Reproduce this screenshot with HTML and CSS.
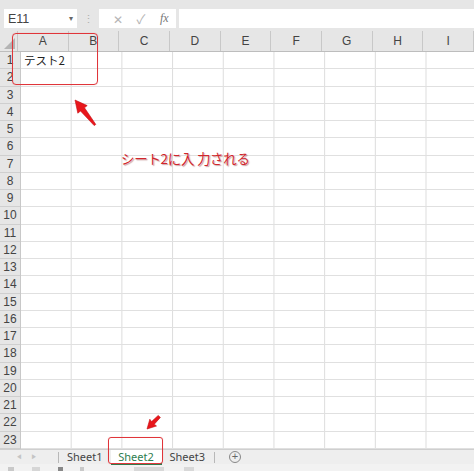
FILE: index.html
```html
<!DOCTYPE html>
<html lang="ja">
<head>
<meta charset="utf-8">
<link rel="stylesheet" href="styles.css">
</head>
<body>
<div class="app">
  <div class="fbar">
    <div class="namebox"><span>E11</span><span class="dd">▾</span></div>
    <div class="dots">⋮</div>
    <div class="fxbox">
      <span class="ico x">✕</span>
      <span class="ico ok">✓</span>
      <span class="ico fx"><i>fx</i></span>
    </div>
    <div class="finput"></div>
  </div>

  <div class="sheet">
    <div class="hrow">
      <div class="corner"><span class="tri"></span></div>
      <div class="ch">A</div><div class="ch">B</div><div class="ch">C</div><div class="ch">D</div><div class="ch">E</div><div class="ch">F</div><div class="ch">G</div><div class="ch">H</div><div class="ch">I</div>
    </div>
    <div class="body">
      <div class="rheads">
        <div class="rh">1</div><div class="rh">2</div><div class="rh">3</div><div class="rh">4</div><div class="rh">5</div><div class="rh">6</div><div class="rh">7</div><div class="rh">8</div><div class="rh">9</div><div class="rh">10</div><div class="rh">11</div><div class="rh">12</div><div class="rh">13</div><div class="rh">14</div><div class="rh">15</div><div class="rh">16</div><div class="rh">17</div><div class="rh">18</div><div class="rh">19</div><div class="rh">20</div><div class="rh">21</div><div class="rh">22</div><div class="rh">23</div>
      </div>
      <div class="cells">
        <div class="row"><span class="val">テスト2</span></div>
        <div class="row"></div><div class="row"></div><div class="row"></div><div class="row"></div><div class="row"></div><div class="row"></div><div class="row"></div><div class="row"></div><div class="row"></div><div class="row"></div><div class="row"></div><div class="row"></div><div class="row"></div><div class="row"></div><div class="row"></div><div class="row"></div><div class="row"></div><div class="row"></div><div class="row"></div><div class="row"></div><div class="row"></div><div class="row"></div>
      </div>
    </div>
  </div>

  <div class="tabbar">
    <span class="nav prev">◀</span><span class="nav">▶</span>
    <span class="sep sep1"></span>
    <span class="tab">Sheet1</span>
    <span class="tab active">Sheet2</span>
    <span class="tab">Sheet3</span>
    <span class="sep sep2"></span>
    <span class="plus">+</span>
  </div>
  <div class="status">
    <span class="sb s1"></span><span class="sb s2"></span><span class="sb s3"></span><span class="sb s4"></span><span class="sb s5"></span><span class="sb s6"></span>
  </div>

  <div class="mark box1"></div>
  <div class="mark box2"></div>
  <div class="note">シート2に入 力される</div>
  <svg class="arrows" width="474" height="471" viewBox="0 0 474 471">
    <polygon points="75,100 87.2,105.6 84.5,107.8 95.8,124.4 94.2,125.6 80.5,111 77.8,113.2" fill="#e8161b" stroke="#c40d12" stroke-width="0.6"/>
    <polygon points="147,429 156.5,426 154.3,424.2 160.4,417.4 158.2,415.4 151.6,421.6 149.8,419.2" fill="#e8161b" stroke="#c40d12" stroke-width="0.6"/>
  </svg>
</div>
</body>
</html>
```

FILE: styles.css
```css
* { box-sizing: border-box; }
html, body { margin: 0; padding: 0; background: #fff; }
body { font-family: "Noto Sans CJK JP", "Noto Sans", "Liberation Sans", sans-serif; }

.app { position: relative; width: 474px; height: 471px; overflow: hidden; }

/* formula bar */
.fbar {
  height: 31px;
  background: #e6e6e6;
  display: flex;
  align-items: flex-start;
  padding: 9px 0 0 4px;
}
.namebox {
  width: 73px; height: 19px;
  background: #fff;
  display: flex; align-items: center; justify-content: space-between;
  padding: 0 4px 0 4px;
  font-family: "Liberation Sans", sans-serif;
  font-size: 12.5px; color: #444;
}
.namebox .dd { font-size: 8px; color: #666; }
.dots {
  width: 22px; text-align: center;
  color: #b0b0b0; font-size: 11px; line-height: 19px;
}
.fxbox {
  width: 77px; height: 19px; background: #fff;
  display: flex; align-items: center;
  padding-left: 7px;
}
.ico { display: inline-flex; justify-content: center; width: 25px; color: #b5b5b5; font-size: 13px; line-height: 19px; }
.ico.x { font-size: 12px; }
.ico.fx { color: #777; font-family: "Liberation Serif", serif; font-size: 12px; }
.finput { flex: 1; height: 19px; background: #fff; margin-left: 3px; }

/* sheet */
.sheet { height: 418px; }
.hrow {
  display: flex; height: 21px;
  background: #e6e6e6;
  border-bottom: 1px solid #bdbdbd;
}
.corner {
  width: 21px; position: relative;
  border-right: 1px solid #c8c8c8;
}
.tri {
  position: absolute; right: 2px; bottom: 2px;
  width: 0; height: 0;
  border-left: 11px solid transparent;
  border-bottom: 11px solid #b4b4b4;
}
.ch {
  width: 50.7px; flex: none;
  border-right: 1px solid #c8c8c8;
  text-align: center;
  font-family: "Liberation Sans", sans-serif;
  font-size: 12px; color: #444;
  line-height: 20px;
}
.body { display: flex; }
.rheads { width: 21px; background: #e6e6e6; border-right: 1px solid #c8c8c8; }
.rh {
  height: 17.26px;
  border-bottom: 1px solid #cfcfcf;
  text-align: center;
  font-family: "Liberation Sans", sans-serif;
  font-size: 12px; color: #444;
  line-height: 17px;
}
.cells {
  flex: 1;
  background-image: linear-gradient(to left, #dcdcdc 1px, transparent 1px);
  background-size: 50.7px 100%;
}
.row {
  height: 17.26px;
  border-bottom: 1px solid #e0e0e0;
  padding-left: 3px;
  font-size: 11.5px; color: #222;
  line-height: 16px;
}

/* tabs */
.tabbar {
  height: 15px;
  background: #eeeeee;
  border-top: 1px solid #cfcfcf;
  display: flex; align-items: center;
  font-family: "Noto Sans", "Liberation Sans", sans-serif;
  font-size: 11px; color: #444;
}
.nav { color: #c4c4c4; font-size: 6px; width: 15px; text-align: center; }
.nav.prev { margin-left: 11px; }
.sep { width: 1px; height: 11px; background: #b8b8b8; }
.sep1 { margin-left: 17px; }
.sep2 { margin-left: 1px; }
.tab { padding: 0 8px; line-height: 14px; height: 14px; }
.tab.active {
  background: #fff; color: #2e7d4f;
  border-bottom: 2px solid #2e7d4f;
  line-height: 13px; height: 15px;
  width: 51px; text-align: center; padding: 0;
}
.plus {
  margin-left: 14px;
  width: 12px; height: 12px; border-radius: 50%;
  border: 1px solid #888;
  color: #666; font-size: 11px; line-height: 9px; text-align: center;
  font-family: "Liberation Sans", sans-serif;
}
.status {
  height: 7px; background: #f2f2f2;
  display: flex; align-items: flex-start;
  padding-top: 3px;
}
.sb { height: 4px; background: #c9c9c9; display: block; }
.s1 { width: 6px; margin-left: 8px; }
.s2 { width: 8px; margin-left: 18px; background: #d6d6d6; }
.s3 { width: 5px; margin-left: 18px; background: #888; }
.s4 { width: 4px; margin-left: 17px; }
.s5 { width: 30px; margin-left: 50px; background: #d8d8d8; }
.s6 { width: 10px; margin-left: 20px; background: #d8d8d8; }

/* annotations */
.mark {
  position: absolute;
  border: 1.5px solid #e0353a;
  border-radius: 4px;
  box-shadow: 0 0 1px rgba(200,0,0,0.3);
}
.box1 { left: 12px; top: 33px; width: 86px; height: 52px; }
.box2 { left: 108px; top: 437px; width: 55px; height: 27px; border-radius: 3px; }
.note {
  position: absolute; left: 121px; top: 149px;
  font-family: "Noto Sans CJK JP", sans-serif;
  font-size: 13.5px; line-height: 18px;
  color: #d1262c;
  letter-spacing: -0.3px;
  text-shadow: 0 0 2px #fff, 1px 1px 1px rgba(110,0,0,0.45);
}
.arrows { position: absolute; left: 0; top: 0; pointer-events: none; }
```
